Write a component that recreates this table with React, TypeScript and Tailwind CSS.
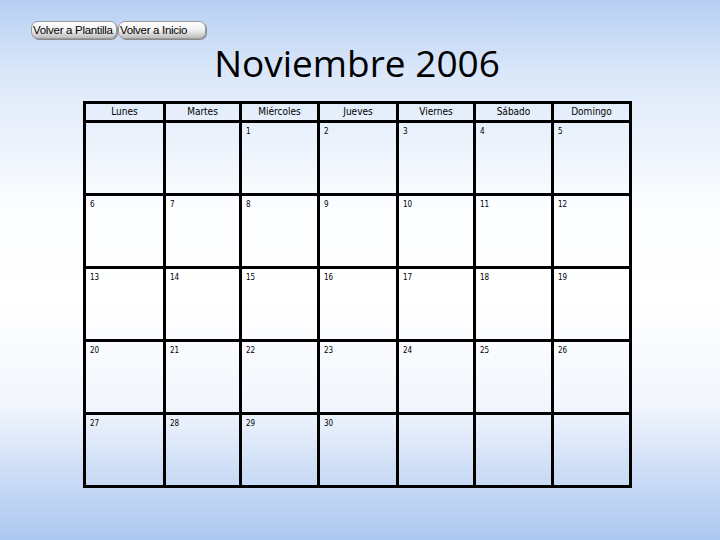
const dias = ["Lunes", "Martes", "Miércoles", "Jueves", "Viernes", "Sábado", "Domingo"];

const semanas: (number | null)[][] = [
  [null, null, 1, 2, 3, 4, 5],
  [6, 7, 8, 9, 10, 11, 12],
  [13, 14, 15, 16, 17, 18, 19],
  [20, 21, 22, 23, 24, 25, 26],
  [27, 28, 29, 30, null, null, null],
];

function Boton({ label, w }: { label: string; w: string }) {
  return (
    <button
      className={`${w} h-[18px] overflow-hidden whitespace-nowrap rounded-[7px] border border-[#9a9a9a] bg-gradient-to-b from-white via-[#f1f1f1] to-[#bdbdbd] px-[1px] text-left text-[11.5px] leading-[16px] tracking-[-0.3px] text-black shadow-[1px_1px_0_#8a8a8a]`}
      style={{ fontFamily: '"Liberation Sans", Arial, sans-serif' }}
    >
      {label}
    </button>
  );
}

export default function App() {
  return (
    <div className="h-[540px] w-[720px] overflow-hidden bg-[linear-gradient(to_bottom,#b7cff3_0%,#dce8f9_14%,#fbfdff_38%,#ffffff_55%,#f2f6fd_75%,#cbdcf6_88%,#acc8f1_100%)]">
      {/* botones */}
      <div className="flex gap-[1px] pl-[31px] pt-[21px]">
        <Boton label="Volver a Plantilla" w="w-[86px]" />
        <Boton label="Volver a Inicio" w="w-[88px]" />
      </div>

      <h1
        className="mt-[1px] ml-[-6px] text-center text-[37px] leading-[46px] text-black"
        style={{ fontFamily: '"Open Sans", sans-serif' }}
      >
        Noviembre 2006
      </h1>

      {/* calendario */}
      <div
        className="ml-[83px] mt-[15px] grid w-[549px] grid-cols-[80px_76px_78px_79px_77px_78px_78px] grid-rows-[19px_73px_73px_73px_73px_73px] border-l-[3px] border-t-[3px] border-black"
        style={{ fontFamily: '"DejaVu Sans Condensed", "DejaVu Sans", sans-serif' }}
      >
        {dias.map((d) => (
          <div
            key={d}
            className="flex items-center justify-center border-r-[3px] border-b-[3px] border-black text-[10px] leading-none text-black"
          >
            {d}
          </div>
        ))}
        {semanas.flat().map((n, i) => (
          <div
            key={i}
            className="border-r-[3px] border-b-[3px] border-black pl-[4px] pt-[5px] text-[8px] leading-none text-black"
          >
            {n ?? ""}
          </div>
        ))}
      </div>
    </div>
  );
}
